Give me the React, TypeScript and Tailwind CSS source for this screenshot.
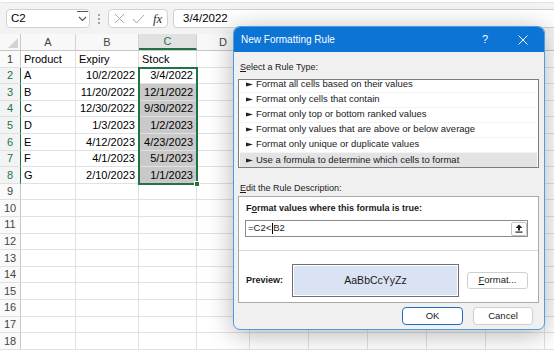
import React from "react";

const SHEET_ROWS: string[][] = [
  ["Product", "Expiry", "Stock"],
  ["A", "10/2/2022", "3/4/2022"],
  ["B", "11/20/2022", "12/1/2022"],
  ["C", "12/30/2022", "9/30/2022"],
  ["D", "1/3/2023", "1/2/2023"],
  ["E", "4/12/2023", "4/23/2023"],
  ["F", "4/1/2023", "5/1/2023"],
  ["G", "2/10/2023", "1/1/2023"],
];

// columns past D sit under the dialog, so their letters are left out
const COLS = [
  { key: "A", label: "A", w: "w-[55px]" },
  { key: "B", label: "B", w: "w-[63px]" },
  { key: "C", label: "C", w: "w-[58px]" },
  { key: "D", label: "D", w: "w-[53px]" },
  { key: "E", label: "", w: "w-[59px]" },
  { key: "F", label: "", w: "w-[59px]" },
  { key: "G", label: "", w: "w-[59px]" },
  { key: "H", label: "", w: "w-[59px]" },
  { key: "I", label: "", w: "w-[59px]" },
  { key: "J", label: "", w: "w-[59px]" },
];

const RULE_TYPES = [
  "Format all cells based on their values",
  "Format only cells that contain",
  "Format only top or bottom ranked values",
  "Format only values that are above or below average",
  "Format only unique or duplicate values",
  "Use a formula to determine which cells to format",
];

export default function App() {
  return (
    <div className="relative h-[350px] w-[554px] overflow-hidden bg-[#f3f3f3] font-['Liberation_Sans',Arial,sans-serif] text-black">
      <div className="h-[3px] rounded-bl-[6px] border-b border-[#e3e3e3] bg-white" />
      <FormulaBar />
      <Sheet />
      <RuleDialog />
    </div>
  );
}

function FormulaBar() {
  return (
    <div className="mt-[6px] flex h-[19px] items-stretch pl-[6px]">
      <div className="relative flex w-[84px] items-center rounded-[4px] border border-[#d2d2d2] bg-white pl-[4px] text-[11.5px]">
        C2
        <div className="absolute right-[1px] top-[1px] h-[1px] w-[11px] bg-[#555]" />
        <svg className="absolute right-[2px] top-[6px]" width="9" height="6" viewBox="0 0 9 6">
          <path d="M1 1 L4.5 4.5 L8 1" fill="none" stroke="#555" strokeWidth="1.1" />
        </svg>
      </div>
      <div className="flex w-[18px] flex-col items-center justify-center gap-[2px]">
        <span className="h-[2px] w-[2px] rounded-full bg-[#8a8a8a]" />
        <span className="h-[2px] w-[2px] rounded-full bg-[#8a8a8a]" />
        <span className="h-[2px] w-[2px] rounded-full bg-[#8a8a8a]" />
      </div>
      <div className="flex w-[60px] items-center rounded-[4px] border border-[#d2d2d2] bg-white">
        <svg className="ml-[5px]" width="11" height="11" viewBox="0 0 11 11">
          <path d="M1 1 L10 10 M10 1 L1 10" stroke="#a8a8a8" strokeWidth="1" />
        </svg>
        <svg className="ml-[7px]" width="13" height="10" viewBox="0 0 13 10">
          <path d="M1 5 L4.5 9 L12 1" fill="none" stroke="#a8a8a8" strokeWidth="1" />
        </svg>
        <span className="ml-[8px] font-['Liberation_Serif',serif] text-[13px] italic leading-none text-[#333]">fx</span>
      </div>
      <div className="ml-[5px] flex flex-1 items-center rounded-l-[4px] border border-r-0 border-[#d2d2d2] bg-white pl-[9px] text-[11.5px]">
        3/4/2022
      </div>
    </div>
  );
}

function Sheet() {
  const rowNums = Array.from({ length: 18 }, (_, i) => i + 1);
  return (
    <div className="relative mt-[6px]">
      <div className="flex h-[17px] border-b border-[#c8c8c8] bg-[#f8f8f8]">
        <div className="relative w-[21px] shrink-0 border-r border-[#c8c8c8]">
          <svg className="absolute bottom-[2px] right-[2px]" width="10" height="10" viewBox="0 0 10 10">
            <path d="M10 0 L10 10 L0 10 Z" fill="#d3d3d3" />
          </svg>
        </div>
        {COLS.map((c) => (
          <div
            key={c.key}
            className={
              c.key === "C"
                ? `${c.w} flex shrink-0 items-center justify-center border-b-2 border-r border-b-[#217346] border-r-[#d4d4d4] bg-[#e1e1e1] text-[11px] text-[#217346]`
                : `${c.w} flex shrink-0 items-center justify-center border-r border-[#d4d4d4] text-[11px] text-[#444]`
            }
          >
            {c.label}
          </div>
        ))}
      </div>
      {rowNums.map((r) => {
        const data = SHEET_ROWS[r - 1];
        const sel = r >= 2 && r <= 8;
        return (
          <div key={r} className="flex h-[16.6px] bg-white">
            <div
              className={
                sel
                  ? "flex w-[21px] shrink-0 items-center justify-center border-b border-r border-b-[#e1e1e1] border-r-[#217346] bg-[#f3f3f3] text-[11px] text-[#217346]"
                  : "flex w-[21px] shrink-0 items-center justify-center border-b border-r border-b-[#e1e1e1] border-r-[#c8c8c8] bg-[#fafafa] text-[11px] text-[#444]"
              }
            >
              {r}
            </div>
            {COLS.map((c, ci) => {
              const val = data && ci < 3 ? data[ci] : "";
              const right = r > 1 && ci > 0;
              const shaded = ci === 2 && r >= 3 && r <= 8;
              return (
                <div
                  key={c.key}
                  className={`${c.w} flex shrink-0 items-center overflow-hidden whitespace-nowrap border-b border-r border-[#e1e1e1] text-[11px] ${
                    right ? "justify-end pr-[3px]" : "pl-[3px]"
                  } ${shaded ? "bg-[#c9c9c9]" : ""}`}
                >
                  {val}
                </div>
              );
            })}
          </div>
        );
      })}
      <div className="absolute left-[137.5px] top-[32.6px] h-[118.2px] w-[60px] border-2 border-[#217346]">
        <div className="absolute -bottom-[4px] -right-[4px] h-[6px] w-[6px] border border-white bg-[#217346]" />
      </div>
    </div>
  );
}

function RuleArrow() {
  return (
    <svg width="7" height="5" viewBox="0 0 7 5" className="shrink-0">
      <path d="M0 0.5 L7 2.5 L0 4.5 Z" fill="#222" />
    </svg>
  );
}

function RuleDialog() {
  return (
    <div className="absolute left-[233px] top-[26px] flex h-[304px] w-[312px] flex-col overflow-hidden rounded-[7px] border border-[#4f9be2] bg-[#f0f0f0] text-[9.5px] text-[#1a1a1a] shadow-[0_4px_26px_rgba(0,0,0,0.3)]">
      <div className="flex h-[25px] shrink-0 items-center bg-[#0b74d4] pl-[7px] text-[10px] text-white">
        <span>New Formatting Rule</span>
        <span className="ml-auto flex w-[38px] justify-center text-[11px]">?</span>
        <span className="mr-[2px] flex w-[38px] justify-center">
          <svg width="10" height="10" viewBox="0 0 10 10">
            <path d="M0.5 0.5 L9.5 9.5 M9.5 0.5 L0.5 9.5" stroke="white" strokeWidth="1" />
          </svg>
        </span>
      </div>

      <div className="mt-[8px] h-[14px] pl-[6px] text-[9px] leading-[14px]">
        <span className="underline">S</span>elect a Rule Type:
      </div>
      <div className="ml-[4px] mt-[5px] h-[89px] w-[301px] overflow-hidden border border-[#7c7c7c] bg-white p-[1px]">
        <div className="-mt-[3.5px]">
          {RULE_TYPES.map((t, i) => (
            <div
              key={t}
              className={`flex h-[15px] items-center gap-[3px] pl-[6px] whitespace-nowrap ${
                i === RULE_TYPES.length - 1 ? "bg-[#e3e3e6]" : "border-b border-[#f4f4f4]"
              }`}
            >
              <RuleArrow />
              <span>{t}</span>
            </div>
          ))}
        </div>
      </div>

      <div className="mt-[13px] h-[14px] pl-[6px] text-[9px] leading-[14px]">
        <span className="underline">E</span>dit the Rule Description:
      </div>
      <div className="ml-[4px] mt-[1px] flex h-[107px] w-[301px] flex-col border border-[#a9a9a9] bg-white">
        <div className="h-[54px] shrink-0 border-b border-[#dadada] pl-[7px] pt-[5px]">
          <div className="h-[13px] text-[9px] font-bold leading-[13px]">
            F<span className="underline">o</span>rmat values where this formula is true:
          </div>
          <div className="-ml-[1px] mt-[5px] flex h-[17px] w-[283px] items-center border border-[#8c8c8c] bg-white pl-[2px]">
            <span className="text-[9.5px]">=C2&lt;</span>
            <span className="mx-[0.5px] h-[11px] w-[1px] bg-black" />
            <span className="text-[9.5px]">B2</span>
            <span className="ml-auto flex h-[14px] w-[16px] items-center justify-center rounded-[2px] border border-[#c4c4c4] bg-white">
              <svg width="8" height="9" viewBox="0 0 8 9">
                <path d="M4 0.5 L7.5 4 L5 4 L5 6.5 L3 6.5 L3 4 L0.5 4 Z" fill="#222" />
                <rect x="0.5" y="7.5" width="7" height="1.2" fill="#222" />
              </svg>
            </span>
          </div>
        </div>
        <div className="flex-1 pl-[7px] pt-[13px]">
          <div className="flex h-[33px] items-center">
            <div className="w-[46px] text-[9px] font-bold">Preview:</div>
            <div className="flex h-[33px] w-[167px] items-center justify-center border border-[#6f6f6f] bg-[#dae3f3] text-[10.5px] shadow-[inset_0_0_0_1px_white]">
              AaBbCcYyZz
            </div>
            <div className="ml-[8px] flex h-[17px] w-[61px] items-center justify-center rounded-[3px] border border-[#cfcfcf] bg-white">
              <span className="underline">F</span>ormat...
            </div>
          </div>
        </div>
      </div>

      <div className="mt-[4px] flex h-[18px] justify-end gap-[10px] pr-[11px]">
        <div className="flex w-[61px] items-center justify-center rounded-[4px] border border-[#1f6fc5] bg-white">
          OK
        </div>
        <div className="flex w-[60px] items-center justify-center rounded-[4px] border border-[#cfcfcf] bg-white">
          Cancel
        </div>
      </div>
    </div>
  );
}
